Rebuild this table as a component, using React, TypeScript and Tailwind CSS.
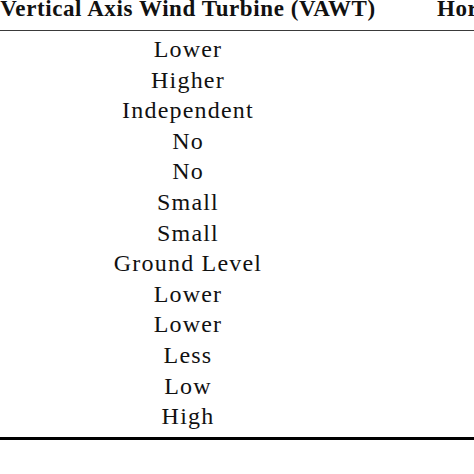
const rows = [
  "Lower",
  "Higher",
  "Independent",
  "No",
  "No",
  "Small",
  "Small",
  "Ground Level",
  "Lower",
  "Lower",
  "Less",
  "Low",
  "High",
];

export default function App() {
  return (
    <div className="w-[474px] h-[474px] overflow-hidden bg-white text-[#111] font-['Liberation_Serif',serif]">
      {/* table */}
      <div className="w-[560px] -ml-[12px] border-b-[3px] border-black pb-[5px]">
        {/* header */}
        <div className="flex -mt-[3px] pb-[9px] border-b border-[#3a3a3a] text-[23px] leading-[24px] font-bold tracking-[0.6px] whitespace-nowrap">
          <div className="w-[400px] shrink-0 text-center">Vertical Axis Wind Turbine (VAWT)</div>
          <div className="pl-[49px]">Horizontal Axis Wind Turbine (HAWT)</div>
        </div>
        {/* body */}
        <div className="mt-[3px]">
          {rows.map((r, i) => (
            <div key={i} className="flex text-[24px] leading-[30.6px] tracking-[1.2px] whitespace-nowrap">
              <div className="w-[400px] shrink-0 text-center">{r}</div>
            </div>
          ))}
        </div>
      </div>
    </div>
  );
}
